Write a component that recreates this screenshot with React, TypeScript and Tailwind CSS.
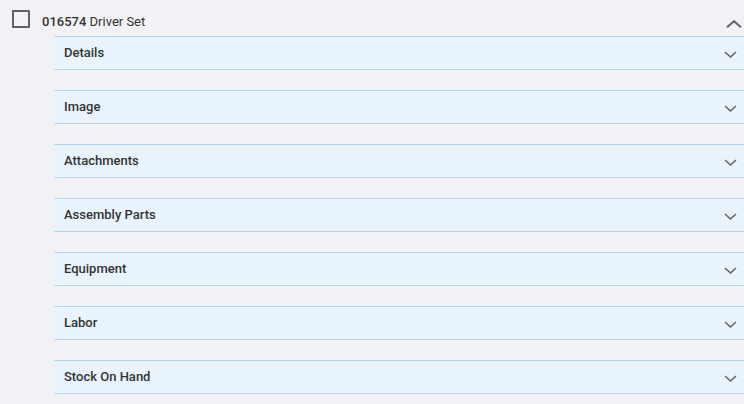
import { useState } from "react";

const sections = [
  "Details",
  "Image",
  "Attachments",
  "Assembly Parts",
  "Equipment",
  "Labor",
  "Stock On Hand",
];

function ChevronDown() {
  return (
    <svg width="13" height="7" viewBox="0 0 13 7" fill="none">
      <path d="M1 1 6.5 6 12 1" stroke="#5f6368" strokeWidth="1.5" />
    </svg>
  );
}

function ChevronUp() {
  return (
    <svg width="16" height="8" viewBox="0 0 16 8" fill="none">
      <path d="M1 7.2 8 1.2 15 7.2" stroke="#5f6368" strokeWidth="2" />
    </svg>
  );
}

export default function App() {
  const [checked, setChecked] = useState(false);

  return (
    <div className="w-[744px] h-[404px] overflow-hidden bg-[#f2f1f6] font-['Roboto',sans-serif] text-[#333]">
      {/* Item header */}
      <div className="flex items-start h-[36px] pl-3 pr-[2px]">
        <button
          onClick={() => setChecked(!checked)}
          className="w-[18px] h-[18px] border-2 border-[#5f6368] rounded-[1px] mt-[10px]"
        />
        <span className="ml-3 text-[13px] leading-[15px] mt-[14px]">
          <span className="font-medium">016574</span> Driver Set
        </span>
        <span className="ml-auto mt-[20px] flex">
          <ChevronUp />
        </span>
      </div>

      {/* Sections */}
      <div className="ml-[54px] flex flex-col gap-[20px]">
        {sections.map((title) => (
          <div
            key={title}
            className="h-[34px] flex items-center justify-between pl-[10px] pr-[7px] bg-[#e8f3fb] border-y border-[#b6d6ee]"
          >
            <span className="text-[13px] leading-[15px] font-medium text-[#333] -mt-[2px]">
              {title}
            </span>
            <span className="mt-[2px] flex">
              <ChevronDown />
            </span>
          </div>
        ))}
      </div>
    </div>
  );
}
